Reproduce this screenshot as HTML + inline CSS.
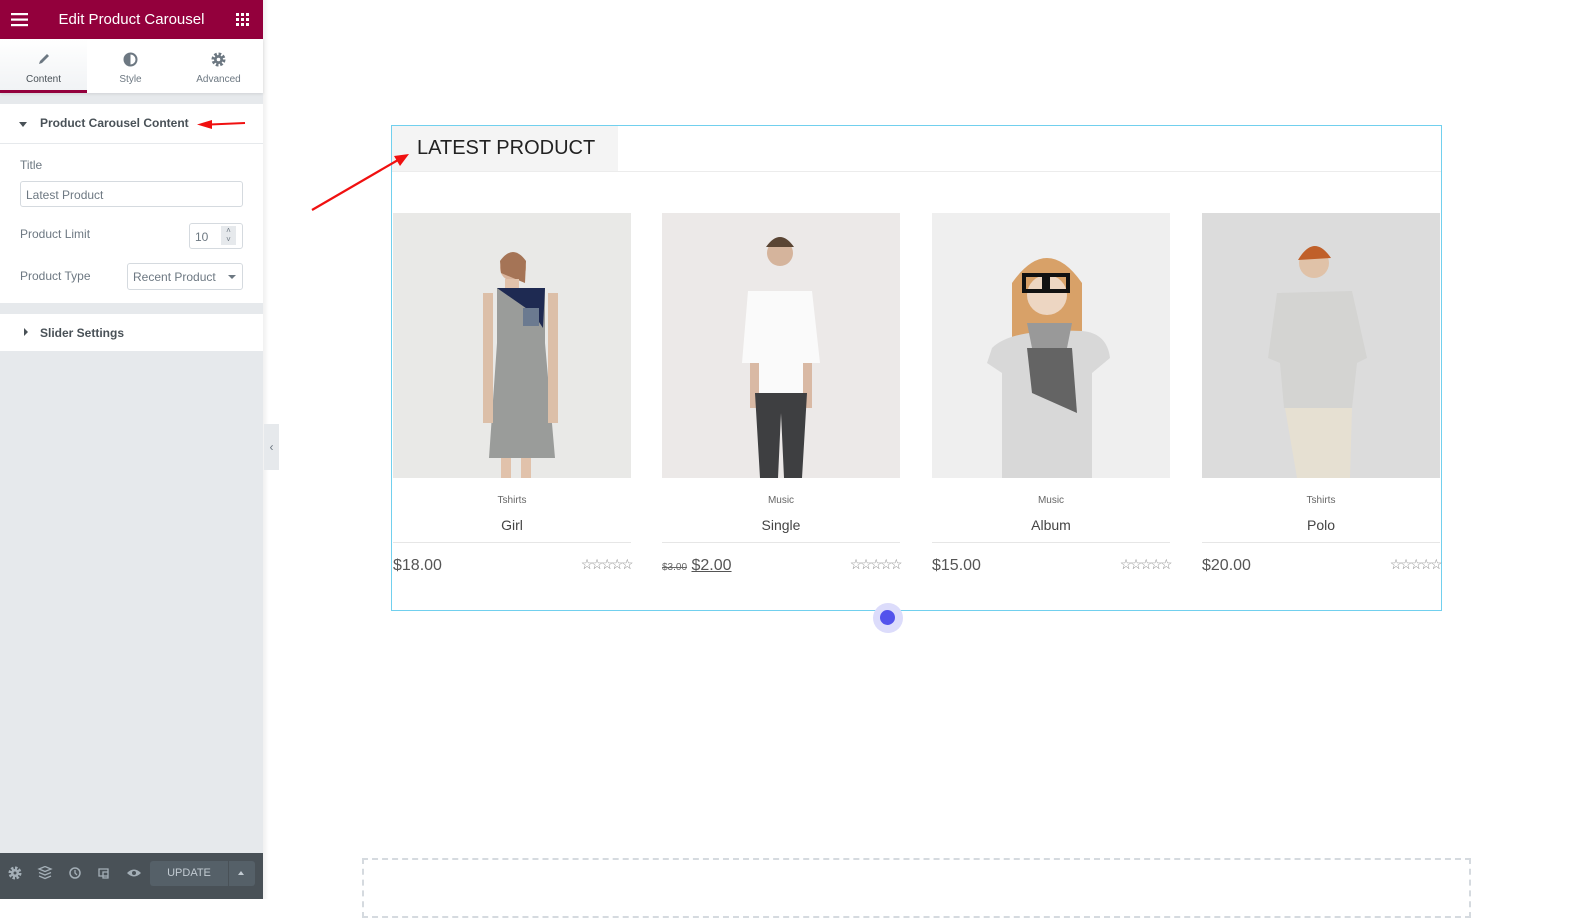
<!DOCTYPE html>
<html><head><meta charset="utf-8"><style>
*{margin:0;padding:0;box-sizing:border-box}
body{width:1581px;height:899px;overflow:hidden;background:#fff;font-family:"Liberation Sans",Arial,sans-serif;position:relative}
.abs{position:absolute}
#side{left:0;top:0;width:263px;height:899px;background:#e6e9ec}
.hdr{left:0;top:0;width:263px;height:39px;background:#93003c;color:#fff;font-size:15px;text-align:center;line-height:39px}
.tabs{left:0;top:39px;width:263px;height:54px;background:#fff;box-shadow:0 1px 3px rgba(0,0,0,.1)}
.tab{position:absolute;top:0;width:87px;height:54px;text-align:center;font-size:10px;color:#6d7882}
.tab span{position:absolute;left:0;right:0;top:35px}
.panel{background:#fff;left:0;width:263px}
.lbl{font-size:12px;color:#6d7882}
.inp{border:1px solid #d5dadf;border-radius:3px;background:#fff;font-size:12px;color:#6d7882}
.card{position:absolute;top:213px;width:238px}
.img{width:238px;height:265px;position:relative;overflow:hidden}
.cat{position:absolute;top:282px;width:238px;text-align:center;font-size:10px;color:#666}
.nm{position:absolute;top:304px;width:238px;text-align:center;font-size:14px;color:#444}
.ln{position:absolute;top:329px;width:238px;height:1px;background:#e6e6e6}
.pr{position:absolute;top:344px;left:0;font-size:16px;color:#555}
.st{position:absolute;top:343px;right:0;font-size:14px;color:#888;letter-spacing:-2.5px}
</style></head><body>
<div id="side" class="abs"></div>
<div class="abs hdr">Edit Product Carousel</div>
<svg class="abs" style="left:11px;top:13px" width="18" height="14"><rect y="0" width="17" height="2.2" fill="#fff"/><rect y="5.5" width="17" height="2.2" fill="#fff"/><rect y="11" width="17" height="2.2" fill="#fff"/></svg>
<svg class="abs" style="left:236px;top:13px" width="14" height="14" fill="#fff"><rect x="0" y="0" width="3" height="3"/><rect x="5" y="0" width="3" height="3"/><rect x="10" y="0" width="3" height="3"/><rect x="0" y="5" width="3" height="3"/><rect x="5" y="5" width="3" height="3"/><rect x="10" y="5" width="3" height="3"/><rect x="0" y="10" width="3" height="3"/><rect x="5" y="10" width="3" height="3"/><rect x="10" y="10" width="3" height="3"/></svg>
<div class="abs tabs">
 <div class="tab" style="left:0;background:linear-gradient(#fff,#f1f3f5);border-bottom:3px solid #93003c"><svg style="position:absolute;left:37px;top:13px" width="14" height="14"><path d="M2 12 L3 9 L10 2 L12 4 L5 11 Z" fill="#6d7882"/></svg><span style="color:#495157">Content</span></div>
 <div class="tab" style="left:87px"><svg style="position:absolute;left:36px;top:13px" width="15" height="15"><circle cx="7.5" cy="7.5" r="6" fill="none" stroke="#6d7882" stroke-width="2"/><path d="M7.5 1.5 A6 6 0 0 0 7.5 13.5Z" fill="#6d7882"/></svg><span>Style</span></div>
 <div class="tab" style="left:175px"><svg style="position:absolute;left:36px;top:13px" width="15" height="15"><circle cx="7.5" cy="7.5" r="5.5" fill="none" stroke="#6d7882" stroke-width="3" stroke-dasharray="2.6 1.7"/><circle cx="7.5" cy="7.5" r="4.5" fill="#6d7882"/><circle cx="7.5" cy="7.5" r="1.8" fill="#fff"/></svg><span>Advanced</span></div>
</div>
<div class="abs panel" style="top:104px;height:199px">
 <div class="abs" style="left:0;top:0;width:263px;height:40px;border-bottom:1px solid #e6e9ec"></div>
 <div class="abs" style="left:19px;top:18px;width:0;height:0;border-left:4px solid transparent;border-right:4px solid transparent;border-top:5px solid #495157"></div>
 <div class="abs" style="left:40px;top:12px;font-size:12px;font-weight:bold;color:#495157">Product Carousel Content</div>
 <div class="abs lbl" style="left:20px;top:54px">Title</div>
 <div class="abs inp" style="left:20px;top:77px;width:223px;height:26px;padding:6px 5px">Latest Product</div>
 <div class="abs lbl" style="left:20px;top:123px">Product Limit</div>
 <div class="abs inp" style="left:189px;top:119px;width:54px;height:26px;padding:6px 5px">10</div>
 <div class="abs" style="left:221px;top:122px;width:15px;height:19px;background:#e6e9ec;font-size:8px;color:#6d7882;text-align:center;line-height:9px">&#708;<br>&#709;</div>
 <div class="abs lbl" style="left:20px;top:165px">Product Type</div>
 <div class="abs inp" style="left:127px;top:159px;width:116px;height:27px;padding:6px 5px">Recent Product</div>
 <div class="abs" style="left:228px;top:171px;border-left:4px solid transparent;border-right:4px solid transparent;border-top:4px solid #6d7882"></div>
</div>
<div class="abs panel" style="top:314px;height:37px">
 <div class="abs" style="left:24px;top:14px;border-top:4px solid transparent;border-bottom:4px solid transparent;border-left:4px solid #495157"></div>
 <div class="abs" style="left:40px;top:12px;font-size:12px;font-weight:bold;color:#495157">Slider Settings</div>
</div>
<div class="abs" style="left:0;top:853px;width:263px;height:46px;background:#495157"></div>
<svg class="abs" style="left:8px;top:866px" width="140" height="14" fill="#a4afb7">
 <circle cx="7" cy="7" r="5" fill="none" stroke="#a4afb7" stroke-width="3" stroke-dasharray="2.4 1.5"/><circle cx="7" cy="7" r="4"/><circle cx="7" cy="7" r="1.5" fill="#495157"/>
 <path d="M31 3 L37 0.5 L43 3 L37 5.5Z M31 6.5 L37 9 L43 6.5 M31 10 L37 12.5 L43 10" stroke="#a4afb7" stroke-width="1.3" fill="none"/>
 <circle cx="67" cy="7" r="5" fill="none" stroke="#a4afb7" stroke-width="1.5"/><path d="M67 4 V7 L69 9" stroke="#a4afb7" stroke-width="1.3" fill="none"/>
 <path d="M91 3 h9 v7 h-9z M95 6 h5 v6 h-5z" stroke="#a4afb7" stroke-width="1.3" fill="none"/>
 <path d="M119 7 Q126 0 133 7 Q126 14 119 7Z"/><circle cx="126" cy="7" r="2" fill="#495157"/>
</svg>
<div class="abs" style="left:150px;top:861px;width:78px;height:25px;background:#556068;border-radius:3px 0 0 3px;color:#c2cbd2;font-size:11px;text-align:center;line-height:25px">UPDATE</div>
<div class="abs" style="left:229px;top:861px;width:26px;height:25px;background:#556068;border-radius:0 3px 3px 0"></div>
<div class="abs" style="left:238px;top:871px;border-left:3px solid transparent;border-right:3px solid transparent;border-bottom:4px solid #c2cbd2"></div>
<div class="abs" style="left:263px;top:0;width:6px;height:899px;background:linear-gradient(90deg,rgba(0,0,0,.06),rgba(0,0,0,0))"></div>
<div class="abs" style="left:264px;top:424px;width:15px;height:46px;background:#e6e9ec;color:#6d7882;font-size:12px;line-height:46px;text-align:center">&#8249;</div>

<div class="abs" style="left:391px;top:125px;width:1051px;height:486px;border:1px solid #71d0ee"></div>
<div class="abs" style="left:392px;top:126px;width:226px;height:45px;background:#f4f4f4"></div>
<div class="abs" style="left:392px;top:171px;width:1049px;height:1px;background:#ececec"></div>
<div class="abs" style="left:417px;top:137px;font-size:20px;color:#222">LATEST PRODUCT</div>

<div class="card" style="left:393px">
 <div class="img" style="background:#e9e9e7"><svg width="238" height="265"><circle cx="120" cy="55" r="13" fill="#d9b49c"/><path d="M107 48 Q120 30 133 48 L132 70 L108 60Z" fill="#a57456"/><rect x="112" y="66" width="14" height="14" fill="#e1c2ab"/><path d="M104 75 L152 75 L152 130 L162 245 L96 245 L104 130Z" fill="#9a9c9a"/><path d="M104 75 L152 75 L150 115 L140 100Z" fill="#1e2a52"/><rect x="130" y="95" width="16" height="18" fill="#6b7a90"/><rect x="90" y="80" width="10" height="130" fill="#dcbfa8"/><rect x="155" y="80" width="10" height="130" fill="#dcbfa8"/><rect x="108" y="245" width="10" height="20" fill="#e1c2ab"/><rect x="128" y="245" width="10" height="20" fill="#e1c2ab"/></svg></div>
 <div class="cat">Tshirts</div><div class="nm">Girl</div><div class="ln"></div>
 <div class="pr">$18.00</div><div class="st">☆☆☆☆☆</div>
</div>
<div class="card" style="left:662px">
 <div class="img" style="background:#ece9e8"><svg width="238" height="265"><circle cx="118" cy="40" r="13" fill="#d5b49c"/><path d="M104 34 Q118 14 132 34Z" fill="#5a4534"/><path d="M86 78 L150 78 L158 150 L146 150 L146 180 L92 180 L92 150 L80 150Z" fill="#fafafa"/><rect x="88" y="150" width="9" height="45" fill="#d9b9a4"/><rect x="141" y="150" width="9" height="45" fill="#d9b9a4"/><path d="M93 180 L145 180 L140 265 L122 265 L119 200 L116 265 L98 265Z" fill="#3e3f41"/></svg></div>
 <div class="cat">Music</div><div class="nm">Single</div><div class="ln"></div>
 <div class="pr"><span style="font-size:10px;text-decoration:line-through;color:#666">$3.00</span> <span style="text-decoration:underline">$2.00</span></div><div class="st">☆☆☆☆☆</div>
</div>
<div class="card" style="left:932px">
 <div class="img" style="background:#efefef"><svg width="238" height="265"><path d="M80 70 Q115 20 150 70 L150 130 L80 130Z" fill="#d8a168"/><circle cx="115" cy="82" r="20" fill="#edd6c2"/><rect x="92" y="62" width="20" height="16" fill="none" stroke="#111" stroke-width="4"/><rect x="116" y="62" width="20" height="16" fill="none" stroke="#111" stroke-width="4"/><path d="M60 135 Q80 115 150 118 Q175 120 178 145 L160 160 L160 265 L70 265 L70 160 L55 150Z" fill="#d8d8d8"/><path d="M95 135 L140 135 L145 200 L100 180Z" fill="#333" opacity=".7"/><path d="M95 110 L140 110 L135 135 L100 135Z" fill="#999"/></svg></div>
 <div class="cat">Music</div><div class="nm">Album</div><div class="ln"></div>
 <div class="pr">$15.00</div><div class="st">☆☆☆☆☆</div>
</div>
<div class="card" style="left:1202px">
 <div class="img" style="background:#dcdcdc"><svg width="238" height="265"><circle cx="112" cy="50" r="15" fill="#e0c2a8"/><path d="M96 47 Q112 20 129 45Z" fill="#c0602a"/><path d="M75 80 L150 78 L165 145 L155 150 L150 195 L82 195 L78 150 L66 145Z" fill="#d4d4d2"/><path d="M83 195 L150 195 L148 265 L95 265Z" fill="#e6e0d2"/></svg></div>
 <div class="cat">Tshirts</div><div class="nm">Polo</div><div class="ln"></div>
 <div class="pr">$20.00</div><div class="st">☆☆☆☆☆</div>
</div>
<div class="abs" style="left:873px;top:603px;width:30px;height:30px;border-radius:50%;background:#dcdcfb"></div>
<div class="abs" style="left:880px;top:610px;width:15px;height:15px;border-radius:50%;background:#5353ec"></div>

<div class="abs" style="left:362px;top:858px;width:1109px;height:60px;border:2px dashed #d5dadf"></div>

<svg class="abs" style="left:0;top:0" width="1581" height="899">
 <line x1="245" y1="123" x2="210" y2="124.5" stroke="#f01010" stroke-width="2"/><path d="M197 124.5 L212 120 L212 129Z" fill="#f01010"/>
 <line x1="312" y1="210" x2="398" y2="160" stroke="#f01010" stroke-width="2.2"/><path d="M409 154 L394 156 L400 166Z" fill="#f01010"/>
</svg>
</body></html>
